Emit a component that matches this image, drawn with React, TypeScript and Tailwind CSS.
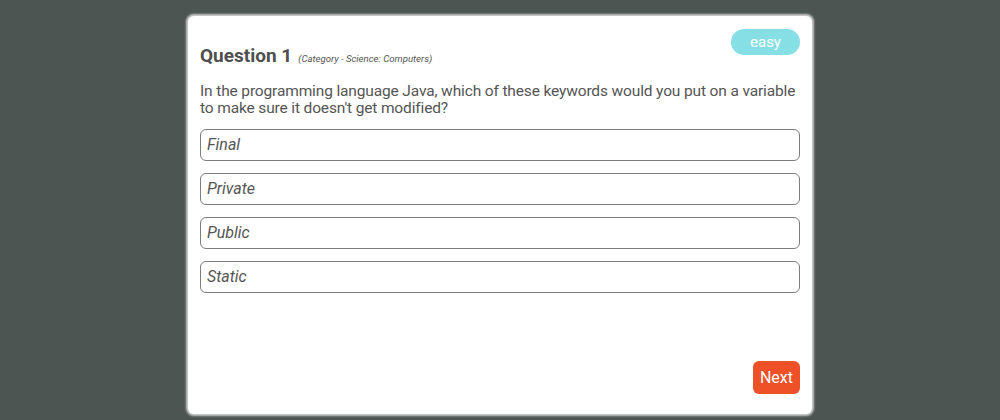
const ANSWERS = ["Final", "Private", "Public", "Static"];

export default function App() {
  return (
    <div
      className="h-[420px] w-[1000px] overflow-hidden bg-[#4d5553] pt-4"
      style={{ fontFamily: "Roboto, 'Liberation Sans', sans-serif" }}
    >
      <div className="mx-auto flex h-[398px] w-[624px] flex-col rounded-md bg-white px-3 pt-[13px] pb-5 shadow-[0_0_2px_2px_#c9cccb]">
        <div className="flex items-start justify-between">
          <h2 className="mt-[13px] text-[19px] leading-[28px] font-bold text-[#4f4f4f]">
            Question 1
            <span className="ml-[6px] text-[9.6px] font-normal italic text-[#555]">
              (Category - Science: Computers)
            </span>
          </h2>
          <span className="flex h-[26px] w-[69px] items-center justify-center rounded-full bg-[#86dfe4] text-[15px] text-white">
            easy
          </span>
        </div>
        <p className="mt-[10px] text-[15.5px] leading-[17px] tracking-[-0.14px] text-[#555]">
          In the programming language Java, which of these keywords would you put on a variable
          to make sure it doesn't get modified?
        </p>
        <div className="mt-[12px] flex flex-col gap-3">
          {ANSWERS.map((a) => (
            <div
              key={a}
              className="flex h-[32px] items-center rounded-md border border-[#7d7d7d] px-[6px] text-[16px] italic text-[#555]"
            >
              {a}
            </div>
          ))}
        </div>
        <div className="mt-auto flex justify-end">
          <button className="h-[33px] rounded-md bg-[#ee5027] px-[7px] text-[16px] text-white">
            Next
          </button>
        </div>
      </div>
    </div>
  );
}
